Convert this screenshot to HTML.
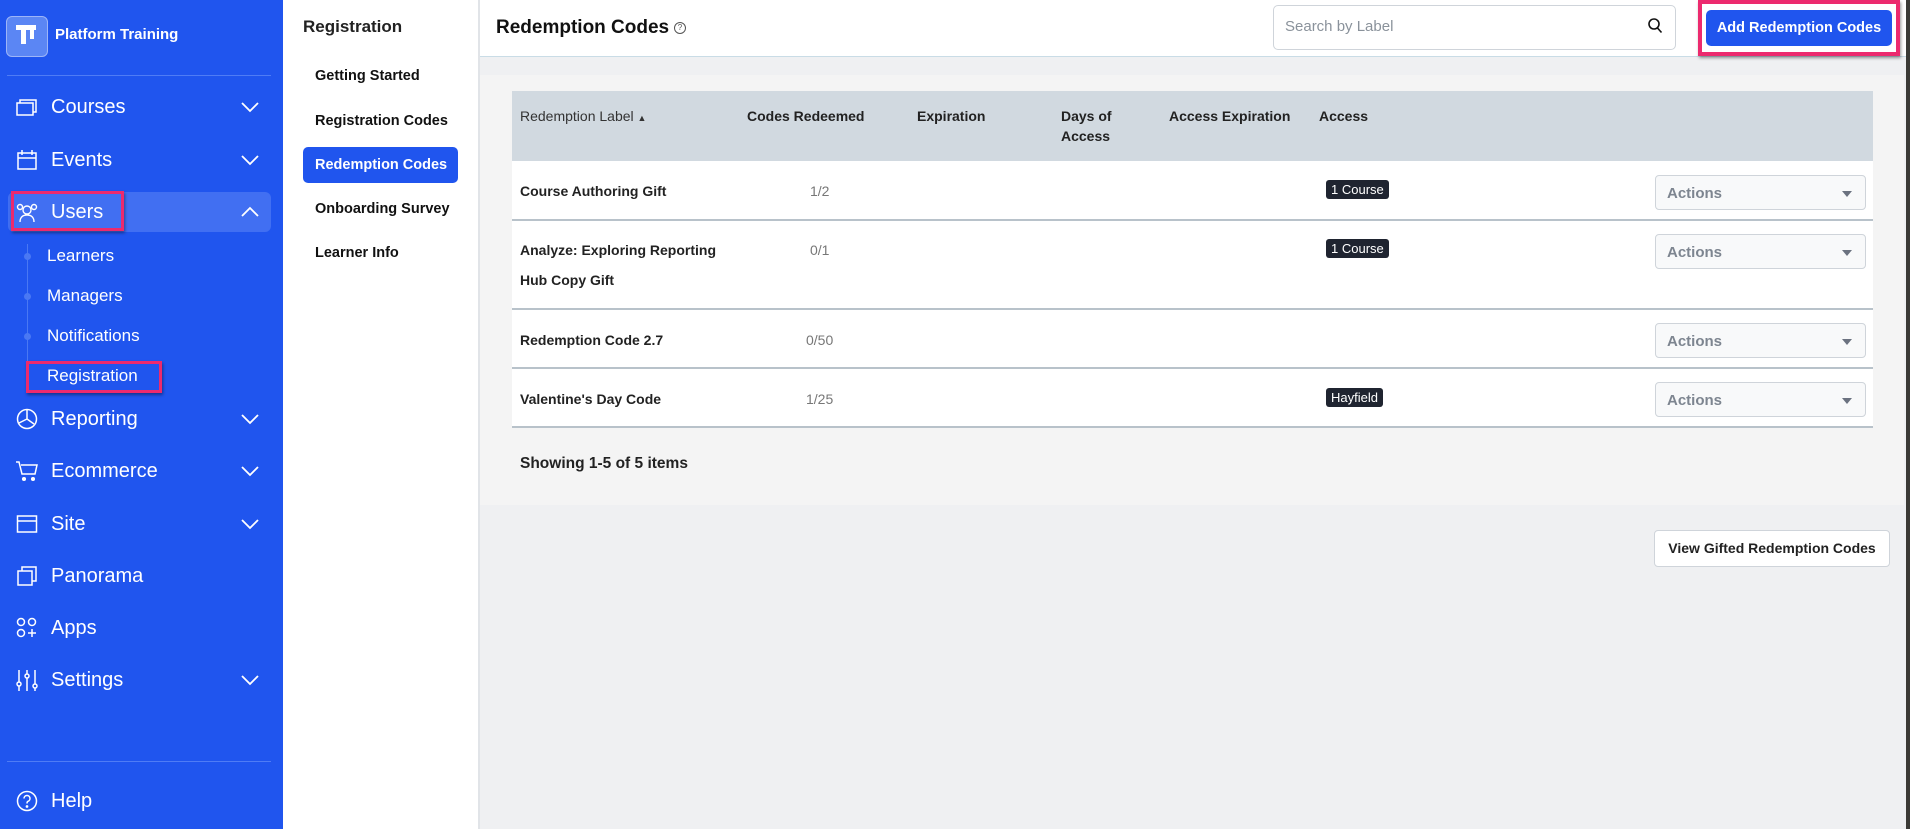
<!DOCTYPE html>
<html><head><meta charset="utf-8"><style>
*{box-sizing:border-box;margin:0;padding:0}
body{width:1910px;height:829px;overflow:hidden;font-family:"Liberation Sans",sans-serif;background:#eff0f2;position:relative}
.abs{position:absolute}
#sb{left:0;top:0;width:283px;height:829px;background:#2055ee;color:#fff}
.mi{position:absolute;left:0;width:283px;height:40px;font-size:20px;display:flex;align-items:center}
.mi svg.ic{position:absolute;left:16px;width:22px;height:22px}
.mi span{position:absolute;left:51px}
.mi svg.ch{position:absolute;left:240px;width:20px;height:12px}
.sub{position:absolute;left:47px;font-size:17px;color:#fff}
#p2{left:283px;top:0;width:197px;height:829px;background:#fff;border-right:2px solid #e1e4e8}
.p2i{position:absolute;left:32px;font-size:14.5px;font-weight:bold;color:#111}
.th{position:absolute;font-size:14px;font-weight:bold;color:#222;line-height:20px}
.td{position:absolute;font-size:14px;font-weight:bold;color:#222}
.num{position:absolute;font-size:14px;color:#777}
.badge{position:absolute;left:1326px;background:#1f2430;color:#fff;font-size:13px;padding:2px 5px;border-radius:3px}
.sel{position:absolute;left:1655px;width:211px;height:35px;border:1px solid #cfd4da;border-radius:4px;background:#f8f9fa;color:#7d8590;font-size:15px;font-weight:bold;padding:9px 11px}
.sel:after{content:"";position:absolute;right:13px;top:15px;border-left:5px solid transparent;border-right:5px solid transparent;border-top:6px solid #6b7280}
.row{position:absolute;left:512px;width:1361px;background:#fff;border-bottom:2px solid #b8c2ca}
</style></head><body>
<div id="sb" class="abs">
 <div class="abs" style="left:6px;top:16px;width:42px;height:41px;border-radius:6px;background:#5b86f4;border:1px solid #9db5f8"></div>
 <div class="abs" style="left:16px;top:25px;width:20px;height:5px;background:#fff"></div>
 <div class="abs" style="left:21px;top:25px;width:5px;height:19px;background:#fff"></div>
 <div class="abs" style="left:30px;top:25px;width:4px;height:14px;background:#fff"></div>
 <div class="abs" style="left:55px;top:26px;font-size:15px;font-weight:bold">Platform Training</div>
 <div class="abs" style="left:7px;top:75px;width:264px;height:1px;background:#4f7cf5"></div>
 <div class="mi" style="top:87px"><svg class="ic" viewBox="0 0 22 22" fill="none" stroke="#fff" stroke-width="1.5"><rect x="1" y="7" width="16" height="12"/><path d="M4 7V4h16v12h-3"/></svg><span>Courses</span><svg class="ch" viewBox="0 0 20 12" fill="none" stroke="#fff" stroke-width="1.8"><path d="M2 2l8 8 8-8"/></svg></div>
 <div class="mi" style="top:140px"><svg class="ic" viewBox="0 0 22 22" fill="none" stroke="#fff" stroke-width="1.5"><rect x="2" y="4" width="18" height="16"/><path d="M2 9h18M6 1v5M16 1v5"/></svg><span>Events</span><svg class="ch" viewBox="0 0 20 12" fill="none" stroke="#fff" stroke-width="1.8"><path d="M2 2l8 8 8-8"/></svg></div>
 <div class="abs" style="left:8px;top:192px;width:263px;height:40px;background:#416ff2;border-radius:6px"></div>
 <div class="mi" style="top:192px"><svg class="ic" viewBox="0 0 22 22" fill="none" stroke="#fff" stroke-width="1.4"><circle cx="11" cy="9" r="4"/><path d="M4 21c0-5 3-7 7-7s7 2 7 7"/><circle cx="4" cy="6" r="2.5"/><circle cx="18" cy="6" r="2.5"/></svg><span>Users</span><svg class="ch" viewBox="0 0 20 12" fill="none" stroke="#fff" stroke-width="1.8"><path d="M2 10l8-8 8 8"/></svg></div>
 <div class="abs" style="left:11px;top:191px;width:113px;height:40px;border:3px solid #ec2a6e;box-shadow:1px 2px 3px rgba(0,0,0,.4)"></div>
 <div class="abs" style="left:27px;top:244px;width:1px;height:135px;background:#4a78f3"></div>
 <div class="abs" style="left:24px;top:253px;width:7px;height:7px;border-radius:50%;background:#4a78f3"></div>
 <div class="abs" style="left:24px;top:293px;width:7px;height:7px;border-radius:50%;background:#4a78f3"></div>
 <div class="abs" style="left:24px;top:333px;width:7px;height:7px;border-radius:50%;background:#4a78f3"></div>
 <div class="sub" style="top:246px">Learners</div>
 <div class="sub" style="top:286px">Managers</div>
 <div class="sub" style="top:326px">Notifications</div>
 <div class="sub" style="top:366px">Registration</div>
 <div class="abs" style="left:26px;top:361px;width:136px;height:32px;border:3px solid #ec2a6e;box-shadow:1px 2px 3px rgba(0,0,0,.4)"></div>
 <div class="mi" style="top:399px"><svg class="ic" viewBox="0 0 22 22" fill="none" stroke="#fff" stroke-width="1.5"><circle cx="11" cy="11" r="9.5"/><path d="M11 1.5V11l7 5M11 11L3 15"/></svg><span>Reporting</span><svg class="ch" viewBox="0 0 20 12" fill="none" stroke="#fff" stroke-width="1.8"><path d="M2 2l8 8 8-8"/></svg></div>
 <div class="mi" style="top:451px"><svg class="ic" viewBox="0 0 22 22" fill="none" stroke="#fff" stroke-width="1.5"><path d="M0 2h3l3 12h13l2-9H5"/><circle cx="8" cy="19" r="1.3" fill="#fff"/><circle cx="17" cy="19" r="1.3" fill="#fff"/></svg><span>Ecommerce</span><svg class="ch" viewBox="0 0 20 12" fill="none" stroke="#fff" stroke-width="1.8"><path d="M2 2l8 8 8-8"/></svg></div>
 <div class="mi" style="top:504px"><svg class="ic" viewBox="0 0 22 22" fill="none" stroke="#fff" stroke-width="1.5"><rect x="1.5" y="3" width="19" height="16"/><path d="M1.5 8h19"/></svg><span>Site</span><svg class="ch" viewBox="0 0 20 12" fill="none" stroke="#fff" stroke-width="1.8"><path d="M2 2l8 8 8-8"/></svg></div>
 <div class="mi" style="top:556px"><svg class="ic" viewBox="0 0 22 22" fill="none" stroke="#fff" stroke-width="1.5"><rect x="2" y="6" width="14" height="14"/><path d="M6 6V2h14v14h-4"/></svg><span>Panorama</span></div>
 <div class="mi" style="top:608px"><svg class="ic" viewBox="0 0 22 22" fill="none" stroke="#fff" stroke-width="1.5"><circle cx="5" cy="5" r="3.5"/><circle cx="16" cy="5" r="3.5"/><circle cx="5" cy="16" r="3.5"/><path d="M16 12v8M12 16h8"/></svg><span>Apps</span></div>
 <div class="mi" style="top:660px"><svg class="ic" viewBox="0 0 22 22" fill="none" stroke="#fff" stroke-width="1.5"><path d="M3 1v21M11 1v21M19 1v21"/><circle cx="3" cy="15" r="2" fill="#2055ee"/><circle cx="11" cy="7" r="2" fill="#2055ee"/><circle cx="19" cy="17" r="2" fill="#2055ee"/></svg><span>Settings</span><svg class="ch" viewBox="0 0 20 12" fill="none" stroke="#fff" stroke-width="1.8"><path d="M2 2l8 8 8-8"/></svg></div>
 <div class="abs" style="left:7px;top:761px;width:264px;height:1px;background:#4f7cf5"></div>
 <div class="mi" style="top:781px"><svg class="ic" viewBox="0 0 22 22" fill="none" stroke="#fff" stroke-width="1.5"><circle cx="11" cy="11" r="9.5"/><path d="M8 8.5a3 3 0 1 1 4 2.8c-1 .4-1 1.2-1 2.2"/><circle cx="11" cy="16.5" r=".6" fill="#fff"/></svg><span>Help</span></div>
</div>
<div id="p2" class="abs">
 <div class="abs" style="left:20px;top:17px;font-size:17px;font-weight:bold;color:#222">Registration</div>
 <div class="p2i" style="top:68px">Getting Started</div>
 <div class="p2i" style="top:113px">Registration Codes</div>
 <div class="abs" style="left:20px;top:147px;width:155px;height:36px;background:#2055ee;border-radius:5px"></div>
 <div class="p2i" style="top:157px;color:#fff">Redemption Codes</div>
 <div class="p2i" style="top:201px">Onboarding Survey</div>
 <div class="p2i" style="top:245px">Learner Info</div>
</div>
<div class="abs" style="left:480px;top:0;width:1430px;height:57px;background:#fff;border-bottom:1px solid #c9dce6"></div>
<div class="abs" style="left:496px;top:17px;font-size:19px;font-weight:bold;color:#111">Redemption Codes</div>
<div class="abs" style="left:674px;top:22px;width:12px;height:12px;border:1px solid #555;border-radius:50%;font-size:8px;text-align:center;line-height:10px;color:#555">?</div>
<div class="abs" style="left:1273px;top:5px;width:403px;height:45px;border:1px solid #cfd4da;border-radius:5px;background:#fff"></div>
<div class="abs" style="left:1285px;top:18px;font-size:15px;color:#8a929b">Search by Label</div>
<svg class="abs" style="left:1648px;top:18px" width="15" height="16" viewBox="0 0 15 16" fill="none" stroke="#111" stroke-width="1.6"><circle cx="6" cy="6" r="5"/><path d="M9.5 10l4 4.5"/></svg>
<div class="abs" style="left:1698px;top:0;width:202px;height:56px;border:4px solid #ec2a6e;background:#fff;box-shadow:1px 2px 3px rgba(0,0,0,.4)"></div>
<div class="abs" style="left:1706px;top:10px;width:186px;height:36px;background:#2055ee;border-radius:5px;color:#fff;font-size:14.5px;font-weight:bold;text-align:center;line-height:36px">Add Redemption Codes</div>
<div class="abs" style="left:480px;top:75px;width:1424px;height:430px;background:#f4f4f4"></div>
<div class="abs" style="left:512px;top:91px;width:1361px;height:70px;background:#d1d9e0"></div>
<div class="th" style="left:520px;top:106px;font-weight:normal;color:#333">Redemption Label <span style="font-size:9px">▲</span></div>
<div class="th" style="left:747px;top:106px">Codes Redeemed</div>
<div class="th" style="left:917px;top:106px">Expiration</div>
<div class="th" style="left:1061px;top:106px">Days of<br>Access</div>
<div class="th" style="left:1169px;top:106px">Access Expiration</div>
<div class="th" style="left:1319px;top:106px">Access</div>
<div class="row" style="top:161px;height:60px"></div>
<div class="row" style="top:221px;height:89px"></div>
<div class="row" style="top:310px;height:59px"></div>
<div class="row" style="top:369px;height:59px"></div>
<div class="td" style="left:520px;top:183px">Course Authoring Gift</div>
<div class="num" style="left:810px;top:183px">1/2</div>
<div class="badge" style="top:180px">1 Course</div>
<div class="sel" style="top:175px">Actions</div>
<div class="td" style="left:520px;top:235px;line-height:30px">Analyze: Exploring Reporting<br>Hub Copy Gift</div>
<div class="num" style="left:810px;top:242px">0/1</div>
<div class="badge" style="top:239px">1 Course</div>
<div class="sel" style="top:234px">Actions</div>
<div class="td" style="left:520px;top:332px">Redemption Code 2.7</div>
<div class="num" style="left:806px;top:332px">0/50</div>
<div class="sel" style="top:323px">Actions</div>
<div class="td" style="left:520px;top:391px">Valentine's Day Code</div>
<div class="num" style="left:806px;top:391px">1/25</div>
<div class="badge" style="top:388px">Hayfield</div>
<div class="sel" style="top:382px">Actions</div>
<div class="abs" style="left:520px;top:455px;font-size:15.5px;font-weight:bold;color:#222">Showing 1-5 of 5 items</div>
<div class="abs" style="left:1654px;top:530px;width:236px;height:37px;background:#fff;border:1px solid #cfd4da;border-radius:4px;font-size:14px;font-weight:bold;color:#222;text-align:center;line-height:35px">View Gifted Redemption Codes</div>
<div class="abs" style="left:1906px;top:0;width:4px;height:829px;background:#3b3a36"></div>
</body></html>
